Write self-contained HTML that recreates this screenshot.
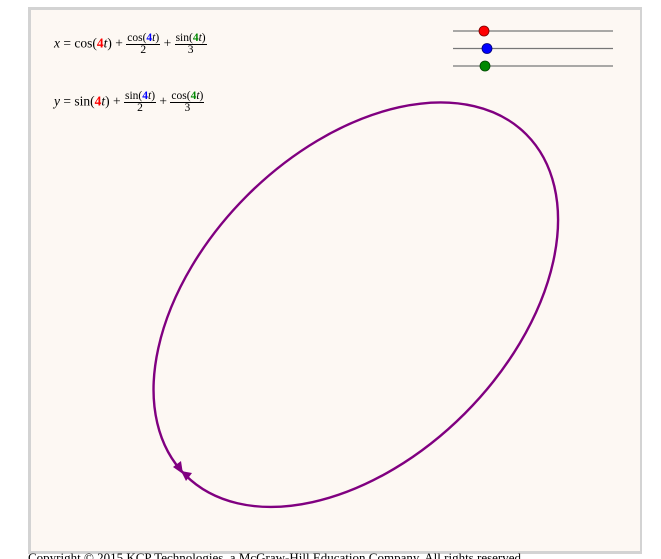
<!DOCTYPE html>
<html><head><style>
html,body{margin:0;width:661px;height:559px;overflow:hidden;}
body{background:#fff;position:relative;font-family:"Liberation Serif",serif;}
#frame{position:absolute;left:28px;top:7px;width:609px;height:541px;background:#fdf8f3;border-left:3px solid #d3d3d3;border-top:3px solid #d3d3d3;border-right:2px solid #d3d3d3;border-bottom:3px solid #d3d3d3;}
.f{position:absolute;font-size:13.5px;color:#000;white-space:nowrap;}
.fr{display:inline-block;vertical-align:middle;text-align:center;font-size:11.5px;line-height:11px;}
.fr .n{border-bottom:1px solid #000;padding:0 1px;}
.r{color:#f00;font-weight:bold}.b{color:#00f;font-weight:bold}.g{color:#080;font-weight:bold}
#copy{position:absolute;left:28px;top:550px;font-size:13px;white-space:nowrap;}
</style></head><body>
<div id="frame"></div>
<div class="f" style="left:54px;top:33px"><i>x</i> = cos(<span class="r">4</span><i>t</i>) + <span class="fr"><div class="n">cos(<span class="b">4</span><i>t</i>)</div><div>2</div></span> + <span class="fr"><div class="n">sin(<span class="g">4</span><i>t</i>)</div><div>3</div></span></div>
<div class="f" style="left:54px;top:91px"><i>y</i> = sin(<span class="r">4</span><i>t</i>) + <span class="fr"><div class="n">sin(<span class="b">4</span><i>t</i>)</div><div>2</div></span> + <span class="fr"><div class="n">cos(<span class="g">4</span><i>t</i>)</div><div>3</div></span></div>
<svg width="661" height="559" style="position:absolute;left:0;top:0">
<g stroke="#777" stroke-width="1.3"><line x1="453" y1="31" x2="613" y2="31"/><line x1="453" y1="48.5" x2="613" y2="48.5"/><line x1="453" y1="66" x2="613" y2="66"/></g>
<circle cx="484" cy="31" r="5" fill="#f00" stroke="#700" stroke-width="0.8"/>
<circle cx="487" cy="48.5" r="5" fill="#00f" stroke="#007" stroke-width="0.8"/>
<circle cx="485" cy="66" r="5" fill="#080" stroke="#040" stroke-width="0.8"/>
<ellipse cx="355.8" cy="304.7" rx="241" ry="154" transform="rotate(-45 355.8 304.7)" fill="none" stroke="#800080" stroke-width="2.4"/>
<polygon points="183,474 173,467 181,461" fill="#800080"/>
<polygon points="181,471 192,473 186,481" fill="#800080"/>
</svg>
<div id="copy">Copyright © 2015 KCP Technologies, a McGraw-Hill Education Company. All rights reserved.</div>
</body></html>
